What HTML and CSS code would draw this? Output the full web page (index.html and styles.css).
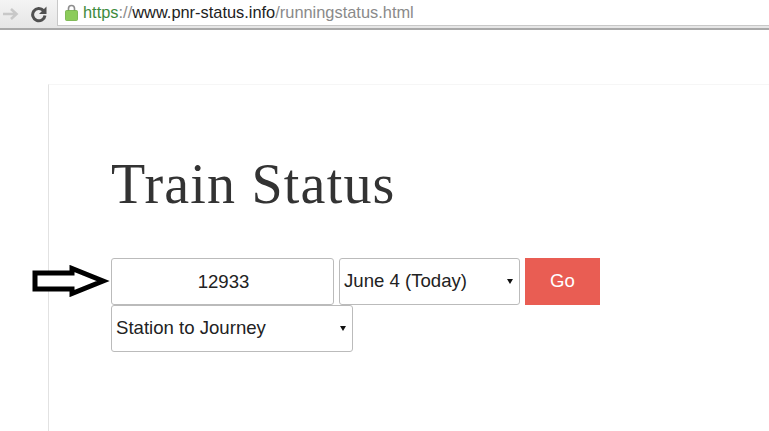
FILE: index.html
```html
<!DOCTYPE html>
<html lang="en">

<head>
  <meta charset="UTF-8">
  <title>Train Status</title>
  <link rel="stylesheet" href="styles.css">
</head>

<body>
  <header class="toolbar">
    <svg class="toolbar__back" width="18" height="14" viewBox="0 0 18 14">
      <path d="M1 7h13M9 2l5.500 5L9 12" fill="none" stroke="#c8c8c8" stroke-width="2.600"/>
    </svg>
    <svg class="toolbar__reload" width="18" height="18" viewBox="0 0 18 18">
      <path d="M13.500 5.500A6.200 6.200 0 1 0 15 10.500" fill="none" stroke="#505050" stroke-width="3"/>
      <path d="M16.500 1.500v7.500H9z" fill="#505050"/>
    </svg>
    <div class="omnibox">
      <svg class="omnibox__lock" width="13" height="17" viewBox="0 0 13 17">
        <path d="M3.500 8V4.500a3 3 0 0 1 6 0V8" fill="none" stroke="#8d8d8d" stroke-width="1.600"/>
        <rect x="0.500" y="6.500" width="12" height="10" rx="1" fill="#8ccc5a" stroke="#6fae42" stroke-width="0.800"/>
      </svg>
      <span class="omnibox__url"><span class="url--https">https</span><span class="url--muted">://</span>www.pnr-status.info<span class="url--muted">/runningstatus.html</span></span>
    </div>
  </header>

  <main class="page">
    <section class="card">
      <h1 class="card__title">Train Status</h1>
      <form class="status-form">
        <svg class="pointer" width="78" height="32" viewBox="0 0 78 32">
          <path d="M3 8h37V3.500L71 16 40 28.500V24H3z" fill="#fff" stroke="#000" stroke-width="5" stroke-linejoin="miter"/>
        </svg>
        <input class="field field--number" type="text" value="12933">
        <div class="select select--date">
          <span>June 4 (Today)</span>
        </div>
        <button class="go" type="button">Go</button>
        <div class="select select--station">
          <span>Station to Journey</span>
        </div>
      </form>
    </section>
  </main>
</body>

</html>
```

FILE: styles.css
```css
* {
  margin: 0;
  padding: 0;
  box-sizing: border-box;
}

html,
body {
  height: 100%;
  overflow: hidden;
}

body {
  display: flex;
  flex-direction: column;
  background-color: #fff;
  font-family: 'Liberation Sans', Arial, sans-serif;
}

.toolbar {
  display: flex;
  align-items: center;
  height: 30px;
  padding-left: 2px;
  background: linear-gradient(#f4f4f4, #e6e6e6);
  border-bottom: 2px solid #a9a9a9;
}

.toolbar__reload {
  margin-left: 10px;
}

.omnibox {
  display: flex;
  align-items: center;
  flex: 1;
  height: 26px;
  margin-left: 9px;
  margin-bottom: 2px;
  padding-left: 7px;
  background-color: #fff;
  border-left: 1px solid #c8c8c8;
  border-bottom: 1px solid #c8c8c8;
}

.omnibox__url {
  margin-left: 5px;
  font-family: 'Liberation Sans', Arial, sans-serif;
  font-size: 16.400px;
  color: #222;
}

.url--https {
  color: #3d8b3d;
}

.url--muted {
  color: #8a8a8a;
}

.page {
  flex: 1;
  padding: 54px 0 0 48px;
}

.card {
  height: 100%;
  padding: 71px 0 0 62px;
  border-left: 1px solid #e2e2e2;
  border-top: 1px solid #f6f6f6;
}

.card__title {
  font-family: 'Liberation Serif', serif;
  font-weight: 400;
  font-size: 56px;
  letter-spacing: 1.200px;
  line-height: 56px;
  color: #333;
}

.status-form {
  position: relative;
  display: flex;
  flex-wrap: wrap;
  align-items: flex-start;
  column-gap: 5px;
  width: 500px;
  margin-top: 46px;
}

.pointer {
  position: absolute;
  left: -79px;
  top: 7px;
}

.field,
.select {
  height: 47px;
  background-color: #fff;
  border: 1px solid #bbb;
  border-radius: 3px;
  font-family: 'Liberation Sans', Arial, sans-serif;
  font-size: 18.600px;
  color: #222;
}

.field--number {
  width: 223px;
  padding-left: 2px;
  text-align: center;
}

.select {
  position: relative;
  display: flex;
  align-items: center;
  padding: 0 0 2px 4px;
}

.select::after {
  content: "";
  position: absolute;
  right: 6px;
  top: 20px;
  border-left: 3px solid transparent;
  border-right: 3px solid transparent;
  border-top: 5px solid #111;
}

.select--date {
  width: 181px;
}

.select--station {
  width: 242px;
}

.go {
  width: 75px;
  height: 47px;
  padding-bottom: 2px;
  background-color: #e95d53;
  border: none;
  font-family: 'Liberation Sans', Arial, sans-serif;
  font-size: 18.600px;
  font-weight: 500;
  color: #fff;
}
```
